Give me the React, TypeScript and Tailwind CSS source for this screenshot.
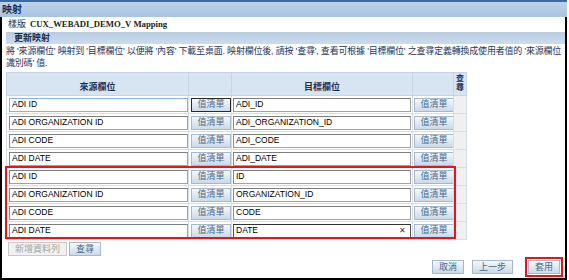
import clsx from 'clsx';

const ROWS: [string, string][] = [
  ['ADI ID', 'ADI_ID'],
  ['ADI ORGANIZATION ID', 'ADI_ORGANIZATION_ID'],
  ['ADI CODE', 'ADI_CODE'],
  ['ADI DATE', 'ADI_DATE'],
  ['ADI ID', 'ID'],
  ['ADI ORGANIZATION ID', 'ORGANIZATION_ID'],
  ['ADI CODE', 'CODE'],
  ['ADI DATE', 'DATE'],
];

function ListButton({ focused }: { focused?: boolean }) {
  return (
    <button
      className={clsx(
        'block h-[14px] w-[40px] border text-[9px] leading-none text-[#4a6888] bg-linear-to-b from-[#f4f8fb] to-[#cbdae8]',
        focused ? 'border-[#2a2a2a]' : 'border-[#a6b8ca]'
      )}
    >
      值清單
    </button>
  );
}

function Field({ value, focus, clear }: { value: string; focus?: 'blue' | 'dark'; clear?: boolean }) {
  return (
    <div
      className={clsx(
        'h-[14px] w-full flex items-center justify-between border bg-white pl-[2px] pr-[4px] text-[8.5px] leading-none text-black',
        focus === 'blue' && 'border-[#86b4e4]',
        focus === 'dark' && 'border-[#555] border-t-[#333]',
        !focus && 'border-[#a2a2a2] border-t-[#7d7d7d] border-l-[#8a8a8a]'
      )}
    >
      <span>{value}</span>
      {clear && <span className="text-[8px] text-[#333]">✕</span>}
    </div>
  );
}

function PlainButton({ label, disabled, className }: { label: string; disabled?: boolean; className?: string }) {
  return (
    <button
      className={clsx(
        'block h-[14px] border px-[6px] text-[9px] leading-none',
        disabled
          ? 'border-[#c9c9c9] bg-[#f1f1f1] text-[#a3a3a3]'
          : 'border-[#a6b8ca] bg-linear-to-b from-[#f4f8fb] to-[#cbdae8] text-[#4a6888]',
        className
      )}
    >
      {label}
    </button>
  );
}

const cell = 'border border-[#d6dde5] p-0 h-[18px] text-[9px] leading-none';

export default function App() {
  return (
    <div className="w-[567px] h-[280px] bg-white flex flex-col font-['Liberation_Sans','Noto_Sans_CJK_TC',sans-serif]">
      {/* title bar */}
      <div className="h-[17px] shrink-0 border-t-2 border-[#3a6aa3] bg-linear-to-b from-[#bcd2e9] to-[#a9c4df] px-[2px] flex items-center">
        <span className="text-[10px] font-bold text-[#13305c] leading-none">映射</span>
      </div>

      <div className="flex-1 flex flex-col border-x-2 border-b-2 border-black pl-[4px] pr-0">
        <div className="h-[14px] flex items-center gap-[4px] pl-[2px] pt-[1px]">
          <span className="text-[9px] text-[#333] leading-none">樣版</span>
          <span className="text-[8.7px] font-bold font-['Liberation_Serif',serif] text-[#222] leading-none">
            CUX_WEBADI_DEMO_V Mapping
          </span>
        </div>

        {/* section header */}
        <div className="mt-[1px] h-[12px] bg-linear-to-b from-[#b6cce3] to-[#cddcec] pl-[8px] flex items-center">
          <span className="text-[9px] font-bold text-[#1d2d4c] leading-none">更新映射</span>
        </div>

        <p className="mt-[1px] text-[9px] leading-[12px] text-[#25365c] tracking-[-0.2px]">
          將 '來源欄位' 映射到 '目標欄位' 以便將 '內容' 下載至桌面. 映射欄位後, 請按 '查尋', 查看可根據 '目標欄位' 之查尋定義轉換成使用者值的 '來源欄位識別碼' 值.
        </p>

        <div className="relative mt-[3px] w-[460px]">
          <table className="table-fixed border-collapse w-[460px]">
            <colgroup>
              <col className="w-[182px]" />
              <col className="w-[43px]" />
              <col className="w-[181px]" />
              <col className="w-[41px]" />
              <col className="w-[13px]" />
            </colgroup>
            <thead>
              <tr>
                <th className="h-[23px] p-0 border border-[#c6d4e3] bg-[#d7e4f1] align-bottom pb-[3px] text-[9px] font-bold text-[#1e2e50] leading-none">
                  來源欄位
                </th>
                <th className="h-[23px] p-0 border border-[#c6d4e3] bg-[#d7e4f1]" />
                <th className="h-[23px] p-0 border border-[#c6d4e3] bg-[#d7e4f1] align-bottom pb-[3px] text-[9px] font-bold text-[#1e2e50] leading-none">
                  目標欄位
                </th>
                <th className="h-[23px] p-0 border border-[#c6d4e3] bg-[#d7e4f1]" />
                <th className="h-[23px] p-0 border border-[#c6d4e3] bg-[#d7e4f1] align-top pt-[1px] text-[8px] font-bold text-[#1e2e50] leading-[9px]">
                  查<br />尋
                </th>
              </tr>
            </thead>
            <tbody>
              {ROWS.map(([src, dst], i) => (
                <tr key={i}>
                  <td className={clsx(cell, 'pl-[2px]')}>
                    <Field value={src} focus={i === 0 ? 'blue' : undefined} />
                  </td>
                  <td className={clsx(cell, 'pl-[2px]')}>
                    <ListButton focused={i === 0} />
                  </td>
                  <td className={clsx(cell, 'px-[1px]')}>
                    <Field value={dst} focus={i === 7 ? 'dark' : undefined} clear={i === 7} />
                  </td>
                  <td className={clsx(cell, 'pl-[1px]')}>
                    <ListButton />
                  </td>
                  <td className={clsx(cell, 'bg-[#f0f0f0]')} />
                </tr>
              ))}
            </tbody>
          </table>
          {/* highlight around the new rows */}
          <div className="absolute left-[-1px] top-[94px] w-[451px] h-[73px] border-2 border-[#e4161b] pointer-events-none" />
        </div>

        <div className="mt-[2px] flex gap-[2px] pl-[2px]">
          <PlainButton label="新增資料列" disabled />
          <PlainButton label="查尋" />
        </div>

        <div className="mt-auto mb-[1px] flex justify-end items-center pr-[2px]">
          <PlainButton label="取消" />
          <PlainButton label="上一步" className="ml-[8px]" />
          <div className="ml-[12px] border-2 border-[#e4161b] p-[1px]">
            <PlainButton label="套用" />
          </div>
        </div>
      </div>
    </div>
  );
}
